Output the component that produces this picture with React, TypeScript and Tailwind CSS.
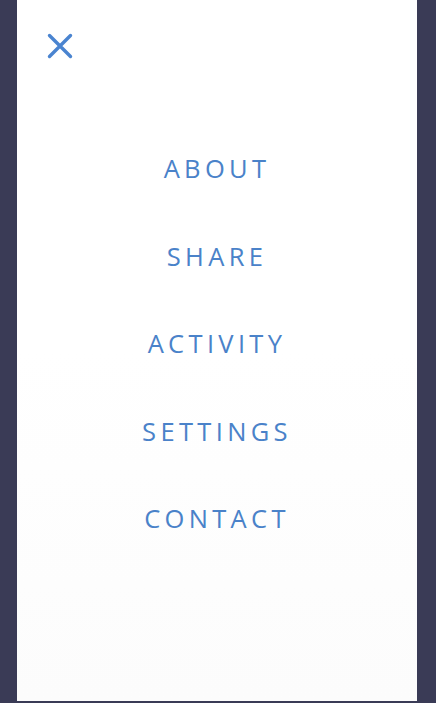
import { useState } from "react"

const links = ["ABOUT", "SHARE", "ACTIVITY", "SETTINGS", "CONTACT"]

export default function App() {
  const [open, setOpen] = useState(true)

  return (
    <div className="h-[703px] w-full bg-[#3a3b56] pl-[17px] font-['Open_Sans',sans-serif]">
      <nav className="flex h-[701px] w-[400px] flex-col bg-gradient-to-b from-white via-white to-[#fcfcfc]">
        <button
          onClick={() => setOpen(!open)}
          className="ml-[29px] mt-[32px] flex h-[27px] w-[27px] items-center justify-center text-[#4a84d0]"
        >
          <svg viewBox="0 0 26 26" className="h-[26px] w-[26px]" fill="none">
            <path
              d="M2.5 2.5 L23.5 23.5 M23.5 2.5 L2.5 23.5"
              stroke="currentColor"
              strokeWidth="3.4"
              strokeLinecap="round"
            />
          </svg>
        </button>

        <ul className="mt-[92px] flex flex-col items-center gap-[52.5px]">
          {links.map((link) => (
            <li key={link}>
              <a
                href="#"
                className="block text-[25.5px] leading-[35px] tracking-[0.17em] text-[#4a82c9]"
              >
                {link}
              </a>
            </li>
          ))}
        </ul>
      </nav>
    </div>
  )
}
